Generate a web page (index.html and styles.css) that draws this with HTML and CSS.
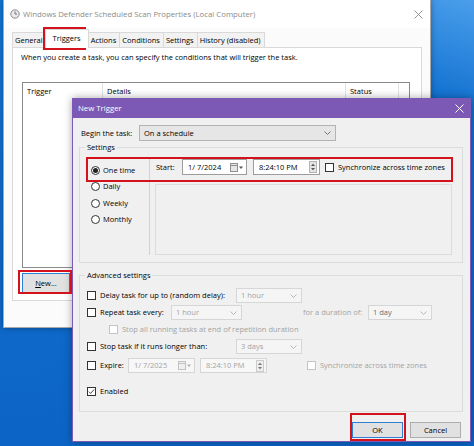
FILE: index.html
```html
<!DOCTYPE html>
<html lang="en">
<head>
    <meta charset="UTF-8">
    <title>New Trigger</title>
    <link rel="stylesheet" href="styles.css">
</head>
<body>
<div class="desktop">

    <div class="props-window">
        <div class="props-titlebar">
            <svg class="clock-icon" width="10" height="10" viewBox="0 0 10 10">
                <circle cx="5" cy="5" r="4.2" fill="#e9e9e9" stroke="#8c8c8c" stroke-width="1"/>
                <path d="M5 2.4V5h2" fill="none" stroke="#6a6a6a" stroke-width="0.9"/>
            </svg>
            <span class="props-title">Windows Defender Scheduled Scan Properties (Local Computer)</span>
            <span class="close-box">
                <svg width="9" height="9" viewBox="0 0 9 9"><path d="M0.5 0.5l8 8M8.5 0.5l-8 8" stroke="#8a8a8a" stroke-width="0.9"/></svg>
            </span>
        </div>
        <div class="tabs">
            <div class="tab">General</div>
            <div class="tab active">Triggers</div>
            <div class="tab">Actions</div>
            <div class="tab">Conditions</div>
            <div class="tab">Settings</div>
            <div class="tab">History (disabled)</div>
        </div>
        <div class="tab-page">
            <p class="intro">When you create a task, you can specify the conditions that will trigger the task.</p>
            <div class="listview">
                <div class="lv-header">
                    <div class="lv-col col-trigger">Trigger</div>
                    <div class="lv-col col-details">Details</div>
                    <div class="lv-col col-status">Status</div>
                    <div class="lv-col col-rest"></div>
                </div>
            </div>
            <div class="btn btn-default new-btn"><u>N</u>ew...</div>
        </div>
    </div>

    <div class="dialog">
        <div class="dlg-titlebar">
            <span class="dlg-title">New Trigger</span>
            <span class="dlg-close">
                <svg width="9" height="9" viewBox="0 0 9 9"><path d="M0.5 0.5l8 8M8.5 0.5l-8 8" stroke="#fff" stroke-width="1"/></svg>
            </span>
        </div>
        <div class="dlg-body">
            <div class="begin-row">
                <span class="begin-label">Begin the task:</span>
                <div class="combo begin-combo">
                    <span>On a schedule</span>
                    <svg class="chev" width="7" height="4" viewBox="0 0 7 4"><path d="M0.5 0.5l3 3 3-3" fill="none" stroke="#666" stroke-width="0.9"/></svg>
                </div>
            </div>

            <fieldset class="group">
                <legend>Settings</legend>
                <div class="settings-body">
                    <div class="freq">
                        <label class="radio-row"><span class="radio checked"></span>One time</label>
                        <label class="radio-row"><span class="radio"></span>Daily</label>
                        <label class="radio-row"><span class="radio"></span>Weekly</label>
                        <label class="radio-row"><span class="radio"></span>Monthly</label>
                    </div>
                    <div class="recurrence">
                        <div class="start-row">
                            <span class="start-label">Start:</span>
                            <div class="field date-field">
                                <span>1/ 7/2024</span>
                                <svg class="cal" width="14" height="9" viewBox="0 0 14 9"><rect x="0.5" y="0.5" width="7" height="8" fill="#e6e6e6" stroke="#8f8f8f"/><path d="M0.5 2.5h7" stroke="#8f8f8f"/><path d="M9 3.5h4l-2 2.5z" fill="#555"/></svg>
                            </div>
                            <div class="field time-field">
                                <span>8:24:10 PM</span>
                                <svg class="spin" width="8" height="12" viewBox="0 0 8 12"><rect x="0.5" y="0.5" width="7" height="11" fill="#e4e4e4" stroke="#b4b4b4"/><path d="M2 5l2-2.2L6 5z M2 7l2 2.2L6 7z" fill="#555"/></svg>
                            </div>
                            <span class="check"></span>
                            <span class="check-text">Synchronize across time zones</span>
                        </div>
                        <div class="recur-box"></div>
                    </div>
                </div>
            </fieldset>

            <fieldset class="group advanced">
                <legend>Advanced settings</legend>
                <div class="adv-body">
                    <div class="adv-row">
                        <span class="check"></span>
                        <span class="adv-label wide">Delay task for up to (random delay):</span>
                        <div class="combo off short"><span>1 hour</span><svg class="chev" width="7" height="4" viewBox="0 0 7 4"><path d="M0.5 0.5l3 3 3-3" fill="none" stroke="#b0b0b0" stroke-width="0.9"/></svg></div>
                    </div>
                    <div class="adv-row">
                        <span class="check"></span>
                        <span class="adv-label repeat">Repeat task every:</span>
                        <div class="combo off repeat-combo"><span>1 hour</span><svg class="chev" width="7" height="4" viewBox="0 0 7 4"><path d="M0.5 0.5l3 3 3-3" fill="none" stroke="#b0b0b0" stroke-width="0.9"/></svg></div>
                        <span class="adv-label dim duration">for a duration of:</span>
                        <div class="combo off day-combo"><span class="darker">1 day</span><svg class="chev" width="7" height="4" viewBox="0 0 7 4"><path d="M0.5 0.5l3 3 3-3" fill="none" stroke="#b0b0b0" stroke-width="0.9"/></svg></div>
                    </div>
                    <div class="adv-row indent">
                        <span class="check off"></span>
                        <span class="dim">Stop all running tasks at end of repetition duration</span>
                    </div>
                    <div class="adv-row">
                        <span class="check"></span>
                        <span class="adv-label wide">Stop task if it runs longer than:</span>
                        <div class="combo off short"><span>3 days</span><svg class="chev" width="7" height="4" viewBox="0 0 7 4"><path d="M0.5 0.5l3 3 3-3" fill="none" stroke="#b0b0b0" stroke-width="0.9"/></svg></div>
                    </div>
                    <div class="adv-row expire-row">
                        <span class="check"></span>
                        <span class="adv-label expire">Expire:</span>
                        <div class="field off exp-date">
                            <span>1/ 7/2025</span>
                            <svg class="cal" width="14" height="9" viewBox="0 0 14 9"><rect x="0.5" y="0.5" width="7" height="8" fill="#efefef" stroke="#c2c2c2"/><path d="M0.5 2.5h7" stroke="#c2c2c2"/><path d="M9 3.5h4l-2 2.5z" fill="#b0b0b0"/></svg>
                        </div>
                        <div class="field off exp-time">
                            <span>8:24:10 PM</span>
                            <svg class="spin" width="8" height="12" viewBox="0 0 8 12"><rect x="0.5" y="0.5" width="7" height="11" fill="#eeeeee" stroke="#cccccc"/><path d="M2 5l2-2.2L6 5z M2 7l2 2.2L6 7z" fill="#777"/></svg>
                        </div>
                        <span class="check off sync-off"></span>
                        <span class="dim">Synchronize across time zones</span>
                    </div>
                    <div class="adv-row enabled-row">
                        <span class="check on">
                            <svg width="7" height="7" viewBox="0 0 7 7"><path d="M0.8 3.6l1.8 1.8 3.6-4" fill="none" stroke="#333" stroke-width="0.9"/></svg>
                        </span>
                        <span class="adv-label">Enabled</span>
                    </div>
                </div>
            </fieldset>

            <div class="dlg-buttons">
                <div class="btn btn-default">OK</div>
                <div class="btn">Cancel</div>
            </div>
        </div>
    </div>

    <div class="mark mark-tab"></div>
    <div class="mark mark-new"></div>
    <div class="mark mark-start"></div>
    <div class="mark mark-ok"></div>
</div>
</body>
</html>
```

FILE: styles.css
```css
* {
    margin: 0;
    padding: 0;
    box-sizing: border-box;
}

body {
    width: 474px;
    height: 446px;
    overflow: hidden;
    font-family: "Open Sans", "Noto Sans", sans-serif;
    font-size: 7.5px;
    line-height: 11px;
    color: #000;
}

.desktop {
    position: relative;
    width: 474px;
    height: 446px;
    background:
        linear-gradient(200deg, rgba(120, 190, 255, 0.55) 0%, rgba(120, 190, 255, 0) 18%),
        linear-gradient(175deg, #1478d4 0%, #0f6ccd 50%, #0b63c4 100%);
}

/* back window: task properties */

.props-window {
    position: absolute;
    left: 3px;
    top: -1px;
    width: 428px;
    height: 329px;
    background: #fbfbfb;
    border: 1px solid #a9a9a9;
    box-shadow: 0 0 6px rgba(0, 0, 0, 0.35);
    display: flex;
    flex-direction: column;
}

.props-titlebar {
    height: 28px;
    display: flex;
    align-items: center;
    padding-left: 6px;
    background: #fff;
    color: #8a8a8a;
    font-size: 7.8px;
}

.clock-icon {
    margin-right: 3px;
}

.close-box {
    margin-left: auto;
    width: 24px;
    display: flex;
    justify-content: center;
}

.tabs {
    display: flex;
    align-items: flex-end;
    height: 18px;
    margin: 1px 8px 0;
}

.tab {
    height: 15px;
    padding: 0 3px 0 2px;
    margin-right: -1px;
    display: flex;
    align-items: center;
    background: #f2f2f2;
    border: 1px solid #d9d9d9;
    border-bottom: none;
}

.tab.active {
    position: relative;
    z-index: 1;
    height: 19px;
    margin: 0 -1px -1px -1px;
    padding: 0 7px 1px 7px;
    background: #fff;
}

.tab-page {
    height: 254px;
    margin: 0 8px;
    background: #fff;
    border: 1px solid #d9d9d9;
    padding: 4px 0 0 8px;
}

.intro {
    height: 11px;
    margin-bottom: 19px;
}

.listview {
    width: 388px;
    height: 186px;
    margin-left: 1px;
    border: 1px solid #8a8a8a;
    background: #fff;
}

.lv-header {
    display: flex;
    height: 17px;
}

.lv-col {
    padding: 3px 0 0 4px;
    border-right: 1px solid #e3e3e3;
}

.col-trigger { width: 80px; }
.col-details { width: 243px; }
.col-status { width: 53px; }
.col-rest { flex: 1; border-right: none; }

.btn {
    height: 16px;
    display: flex;
    align-items: center;
    justify-content: center;
    background: #e1e1e1;
    border: 1px solid #adadad;
}

.btn-default {
    border-color: #2c7fd2;
}

.new-btn {
    width: 48px;
    height: 20px;
    margin: 5px 0 0 1px;
}

/* front dialog: New Trigger */

.dialog {
    position: absolute;
    left: 72px;
    top: 98px;
    width: 399px;
    height: 344px;
    background: #f0f0f0;
    border: 1px solid #7b59b4;
    box-shadow: 0 0 8px rgba(0, 0, 0, 0.35);
}

.dlg-titlebar {
    height: 19px;
    background: #7b59b4;
    color: #fff;
    display: flex;
    align-items: center;
    padding-left: 5px;
    font-size: 7.8px;
}

.dlg-close {
    margin-left: auto;
    margin-right: 6px;
    display: flex;
}

.dlg-body {
    padding: 7px 7px 0 6px;
}

.begin-row {
    display: flex;
    align-items: center;
    height: 16px;
    padding-left: 2px;
}

.begin-label {
    width: 58px;
}

.combo {
    height: 16px;
    display: flex;
    align-items: center;
    justify-content: space-between;
    padding: 0 4px 0 4px;
    background: #e6e6e6;
    border: 1px solid #b3b3b3;
}

.begin-combo {
    width: 197px;
}

.combo.off {
    height: 15px;
    background: #f5f5f5;
    border-color: #d6d6d6;
    color: #a3a3a3;
}

.combo .darker {
    color: #6e6e6e;
}

.group {
    border: 1px solid #dcdcdc;
    margin-top: 1px;
}

.group legend {
    margin-left: 5px;
    padding: 0 2px;
    line-height: 11px;
}

.settings-body {
    display: flex;
    height: 109px;
    padding-top: 4px;
}

.freq {
    width: 70px;
    height: 98px;
    padding: 5px 0 0 11px;
    border-right: 1px solid #d2d2d2;
}

.radio-row {
    display: flex;
    align-items: center;
    height: 16.5px;
}

.radio {
    width: 9px;
    height: 9px;
    border: 1px solid #333;
    border-radius: 50%;
    background: #fff;
    margin-right: 3px;
    display: flex;
    align-items: center;
    justify-content: center;
}

.radio.checked::after {
    content: "";
    width: 5px;
    height: 5px;
    border-radius: 50%;
    background: #222;
}

.recurrence {
    flex: 1;
    padding: 2px 0 0 6px;
}

.start-row {
    display: flex;
    align-items: center;
    height: 16px;
}

.start-label {
    width: 26px;
}

.field {
    height: 16px;
    display: flex;
    align-items: center;
    justify-content: space-between;
    padding: 0 2px 0 5px;
    background: #fff;
    border: 1px solid #9c9c9c;
}

.date-field {
    width: 65px;
    margin-right: 6px;
}

.time-field {
    width: 67px;
    margin-right: 5px;
}

.field.off {
    height: 15px;
    background: #f7f7f7;
    border-color: #d6d6d6;
    color: #a3a3a3;
}

.check {
    width: 9px;
    height: 9px;
    flex: none;
    border: 1px solid #333;
    background: #fff;
    display: flex;
    align-items: center;
    justify-content: center;
}

.check.off {
    border-color: #c4c4c4;
}

.check-text {
    margin-left: 4px;
}

.recur-box {
    width: 297px;
    height: 71px;
    margin: 9px 0 0 -1px;
    border: 1px solid #dcdcdc;
}

.advanced {
    margin-top: 7px;
}

.adv-body {
    padding: 6px 0 11px 7px;
}

.adv-row {
    display: flex;
    align-items: center;
    height: 17px;
}

.adv-row .check {
    margin-right: 4px;
}

.adv-label.wide { width: 136px; }
.adv-label.repeat { width: 71px; }
.adv-label.expire { width: 28px; }

.adv-label.duration {
    width: 65px;
    margin-left: 61px;
}

.dim {
    color: #a3a3a3;
}

.short { width: 66px; }
.repeat-combo { width: 71px; }
.day-combo { width: 64px; }

.indent {
    padding-left: 22px;
}

.expire-row {
    margin-top: 2px;
}

.exp-date {
    width: 67px;
    margin-right: 5px;
}

.exp-time {
    width: 67px;
}

.sync-off {
    margin-left: 40px;
}

.enabled-row {
    margin-top: 9px;
}

.dlg-buttons {
    display: flex;
    justify-content: flex-end;
    gap: 7px;
    margin-top: 10px;
    padding-right: 2px;
}

.dlg-buttons .btn {
    width: 51px;
}

/* red annotation frames */

.mark {
    position: absolute;
    border: 2px solid #d3121c;
    pointer-events: none;
}

.mark-tab { left: 43px; top: 27px; width: 43px; height: 23px; }
.mark-new { left: 18px; top: 270px; width: 54px; height: 24px; }
.mark-start { left: 86px; top: 157px; width: 367px; height: 25px; }
.mark-ok { left: 350px; top: 413px; width: 56px; height: 28px; }
```
